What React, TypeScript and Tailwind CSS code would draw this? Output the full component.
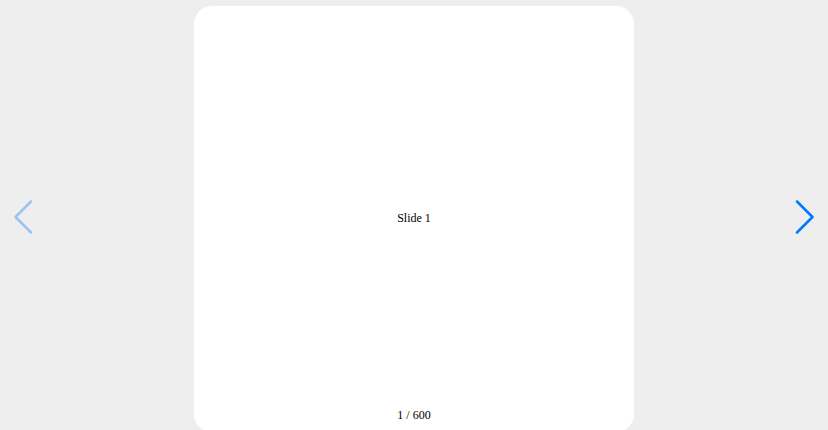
import React from 'react';

function Chevron({ dir, className }: { dir: 'left' | 'right'; className?: string }) {
    return (
        <svg width="20" height="34" viewBox="0 0 20 34" fill="none" className={className}>
            <path
                d={dir === 'left' ? 'M18 1.5 L2.5 17 L18 32.5' : 'M2 1.5 L17.5 17 L2 32.5'}
                stroke="currentColor"
                strokeWidth="2.5"
                strokeLinecap="round"
                strokeLinejoin="round"
            />
        </svg>
    );
}

export default function App() {
    return (
        <div className="relative h-[430px] w-[828px] overflow-hidden bg-[#eeeeee]" style={{ fontFamily: '"Liberation Serif", serif' }}>
            <div className="flex justify-center pt-[6px]">
                <div className="relative flex h-[426px] w-[440px] items-center justify-center rounded-[18px] bg-white text-[12px] text-black">
                    <span className="mb-[3px]">Slide 1</span>
                    <div className="absolute bottom-[8px] left-0 right-0 text-center text-[12px]">1 / 600</div>
                </div>
            </div>
            <button className="absolute left-[13px] top-[200px] text-[#007aff] opacity-35">
                <Chevron dir="left" />
            </button>
            <button className="absolute left-[795px] top-[200px] text-[#007aff]">
                <Chevron dir="right" />
            </button>
        </div>
    );
}
